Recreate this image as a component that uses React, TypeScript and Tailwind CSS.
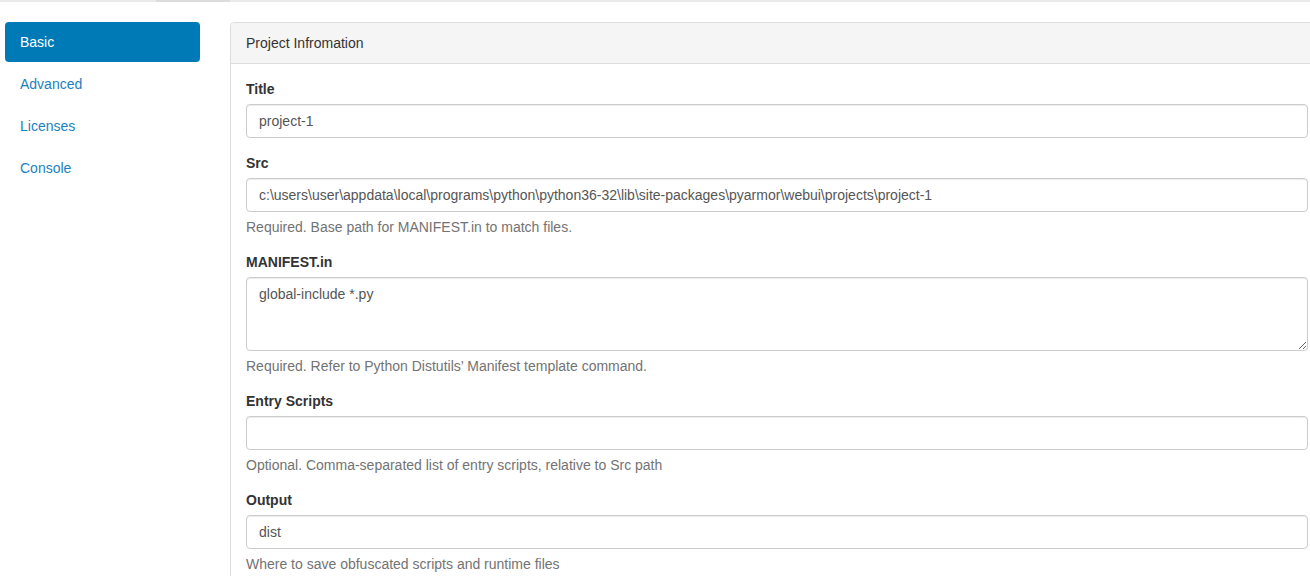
import React from 'react'

type Field = {
  label: string
  value?: string
  help?: string
  multiline?: boolean
}

const fields: Field[] = [
  { label: 'Title', value: 'project-1' },
  {
    label: 'Src',
    value: 'c:\\users\\user\\appdata\\local\\programs\\python\\python36-32\\lib\\site-packages\\pyarmor\\webui\\projects\\project-1',
    help: 'Required. Base path for MANIFEST.in to match files.',
  },
  {
    label: 'MANIFEST.in',
    value: 'global-include *.py',
    help: 'Required. Refer to Python Distutils’ Manifest template command.',
    multiline: true,
  },
  { label: 'Entry Scripts', value: '', help: 'Optional. Comma-separated list of entry scripts, relative to Src path' },
  { label: 'Output', value: 'dist', help: 'Where to save obfuscated scripts and runtime files' },
]

const navItems = ['Basic', 'Advanced', 'Licenses', 'Console']

const controlClass =
  'block w-full rounded-[4px] border border-[#ccc] bg-white px-3 py-[6px] text-[14px] leading-5 text-[#555] shadow-[inset_0_1px_1px_rgba(0,0,0,0.075)] outline-none'

export default function App() {
  return (
    <div className="h-[576px] w-[1310px] overflow-hidden bg-white font-['Liberation_Sans',Arial,sans-serif] text-[14px] leading-5 text-[#333]">
      {/* clipped tab strip above */}
      <div className="flex h-[2px] w-full bg-[#ebebeb]">
        <div className="ml-[156px] h-[2px] w-[74px] bg-[#dcdcdc]" />
      </div>

      <div className="mt-5 flex">
        <ul className="ml-[5px] flex w-[195px] shrink-0 flex-col gap-[2px]">
          {navItems.map((item, i) => (
            <li key={item}>
              <a
                className={
                  i === 0
                    ? 'block rounded-[4px] bg-[#0079b7] px-[15px] py-[10px] text-white'
                    : 'block rounded-[4px] px-[15px] py-[10px] text-[#1b7fc0]'
                }
              >
                {item}
              </a>
            </li>
          ))}
        </ul>

        <div className="ml-[30px] w-[1094px] shrink-0 rounded-[4px] border border-[#ddd]">
          <div className="rounded-t-[4px] border-b border-[#ddd] bg-[#f5f5f5] px-[15px] py-[10px] text-[#333]">
            Project Infromation
          </div>
          <div className="p-[15px]">
            {fields.map((f) => (
              <div key={f.label} className="mb-[15px]">
                <label className="mb-[5px] block font-bold">{f.label}</label>
                {f.multiline ? (
                  <textarea rows={3} readOnly defaultValue={f.value} className={`${controlClass} h-[74px]`} />
                ) : (
                  <input readOnly defaultValue={f.value} className={`${controlClass} h-[34px]`} />
                )}
                {f.help && <p className="mt-[5px] text-[#737373]">{f.help}</p>}
              </div>
            ))}
          </div>
        </div>
      </div>
    </div>
  )
}
